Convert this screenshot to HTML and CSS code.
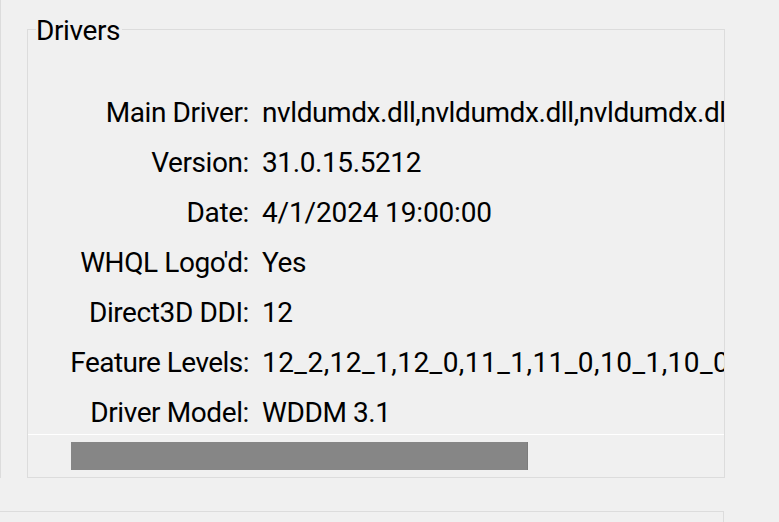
FILE: index.html
```html
<!DOCTYPE html>
<html>
<head>
<meta charset="utf-8">
<link rel="stylesheet" href="styles.css">
</head>
<body>
<div class="page">
  <div class="top">
    <fieldset class="group">
      <legend class="legend">Drivers</legend>
      <div class="scroll">
        <div class="grid">
          <div class="label">Main Driver:</div><div class="value">nvldumdx.dll,nvldumdx.dll,nvldumdx.dll,nvldumdx.dll</div>
          <div class="label">Version:</div><div class="value">31.0.15.5212</div>
          <div class="label">Date:</div><div class="value value-date">4/1/2024 19:00:00</div>
          <div class="label">WHQL Logo'd:</div><div class="value">Yes</div>
          <div class="label">Direct3D DDI:</div><div class="value">12</div>
          <div class="label label-wide">Feature Levels:</div><div class="value value-levels">12_2,12_1,12_0,11_1,11_0,10_1,10_0,9_3,9_2,9_1</div>
          <div class="label">Driver Model:</div><div class="value">WDDM 3.1</div>
        </div>
      </div>
      <div class="hscroll"><div class="thumb"></div></div>
    </fieldset>
  </div>
  <div class="next"></div>
</div>
</body>
</html>
```
FILE: styles.css
```css
html, body {
  margin: 0;
  padding: 0;
  background: #f0f0f0;
  overflow: hidden;
}
.page {
  width: 779px;
  height: 522px;
  font-family: "Roboto", "Lato", sans-serif;
  font-size: 28px;
  letter-spacing: -0.4px;
  color: #000;
}
.top {
  border-left: 1px solid #dcdcdc;
  height: 478px;
  box-sizing: border-box;
  padding-left: 26px;
  padding-top: 10px;
}
.group {
  margin: 0;
  padding: 0;
  width: 698px;
  height: 468px;
  box-sizing: border-box;
  border: 1px solid #dcdcdc;
  min-width: 0;
  display: flex;
  flex-direction: column;
}
.legend {
  margin-left: 8px;
  padding: 0 2px 0 0;
  line-height: 42px;
  height: 38px;
}
.scroll {
  flex: 1;
  overflow: hidden;
  border-bottom: 1px solid #ffffff;
  padding-top: 40px;
}
.grid {
  display: grid;
  grid-template-columns: 221px max-content;
  column-gap: 13px;
  white-space: nowrap;
}
.label {
  text-align: right;
  line-height: 50px;
}
.label-wide {
  letter-spacing: -0.55px;
}
.value {
  line-height: 50px;
}
.value-date {
  letter-spacing: -0.15px;
}
.value-levels {
  letter-spacing: 0.45px;
}
.hscroll {
  height: 42px;
  box-sizing: border-box;
  padding: 7px 0 0 43px;
}
.thumb {
  width: 457px;
  height: 28px;
  background: #868686;
  box-sizing: border-box;
  border-right: 1px solid #7c7c7c;
}
.next {
  margin-top: 33px;
  width: 724px;
  height: 20px;
  border-top: 1px solid #dcdcdc;
  border-right: 1px solid #dcdcdc;
  box-sizing: border-box;
}
```
